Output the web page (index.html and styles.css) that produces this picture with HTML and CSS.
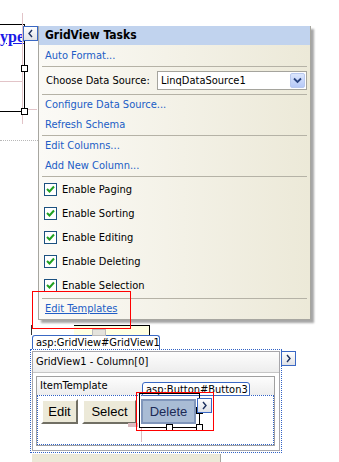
FILE: index.html
```html
<!doctype html>
<html lang="en">
	<head>
		<meta charset="UTF-8">
		<title>GridView Tasks</title>
		<link rel="stylesheet" href="styles.css">
	</head>

	<body>
		<div class="surface">

			<!-- bits of the page behind the smart tag panel -->
			<div class="old-grid">
				<a class="col-link">ype</a>
			</div>
			<span class="guide guide-v"></span>
			<span class="guide guide-h1"></span>
			<span class="guide guide-h2"></span>
			<span class="dots-line"></span>
			<span class="handle handle-1"></span>
			<span class="handle handle-2"></span>
			<div class="old-row"><span class="old-box"></span></div>

			<button class="tag-btn tag-close">
				<svg width="7" height="9" viewBox="0 0 7 9"><path d="M5 1 L2 4.5 L5 8" fill="none" stroke="#1b2f5e" stroke-width="1.4"/></svg>
			</button>

			<div class="tasks">
				<div class="tasks-title">GridView Tasks</div>

				<div class="group first">
					<a>Auto Format...</a>
				</div>

				<div class="source-row">
					<label>Choose Data Source:</label>
					<div class="select">
						<span>LinqDataSource1</span>
						<span class="drop">
							<svg width="9" height="7" viewBox="0 0 9 7"><path d="M1 1.5 L4.5 5 L8 1.5" fill="none" stroke="#2a4480" stroke-width="1.8"/></svg>
						</span>
					</div>
				</div>

				<div class="group">
					<a>Configure Data Source...</a>
					<a>Refresh Schema</a>
				</div>

				<div class="group">
					<a>Edit Columns...</a>
					<a>Add New Column...</a>
				</div>

				<div class="checks">
					<label><span class="box"><svg width="9" height="8" viewBox="0 0 9 8"><path d="M1 4 L3.5 6.5 L8 1.5" fill="none" stroke="#21a121" stroke-width="2"/></svg></span>Enable Paging</label>
					<label><span class="box"><svg width="9" height="8" viewBox="0 0 9 8"><path d="M1 4 L3.5 6.5 L8 1.5" fill="none" stroke="#21a121" stroke-width="2"/></svg></span>Enable Sorting</label>
					<label><span class="box"><svg width="9" height="8" viewBox="0 0 9 8"><path d="M1 4 L3.5 6.5 L8 1.5" fill="none" stroke="#21a121" stroke-width="2"/></svg></span>Enable Editing</label>
					<label><span class="box"><svg width="9" height="8" viewBox="0 0 9 8"><path d="M1 4 L3.5 6.5 L8 1.5" fill="none" stroke="#21a121" stroke-width="2"/></svg></span>Enable Deleting</label>
					<label><span class="box"><svg width="9" height="8" viewBox="0 0 9 8"><path d="M1 4 L3.5 6.5 L8 1.5" fill="none" stroke="#21a121" stroke-width="2"/></svg></span>Enable Selection</label>
				</div>

				<div class="group">
					<a class="underline">Edit Templates</a>
				</div>
			</div>

			<div class="mark mark-templates"></div>

			<!-- the GridView in template editing mode -->
			<div class="gv">
				<div class="ctl-tag gv-tag">asp:GridView#GridView1</div>
				<div class="gv-row">
					<div class="gv-frame">
						<div class="gv-box">
							<div class="gv-head">GridView1 - Column[0]</div>
							<div class="gv-body">
								<div class="tpl">
									<div class="tpl-head">ItemTemplate</div>
									<div class="tpl-body">
										<button class="btn btn-edit">Edit</button>
										<button class="btn btn-select">Select</button>
										<button class="btn btn-delete">Delete</button>
									</div>
								</div>
							</div>
						</div>
					</div>
					<button class="tag-btn tag-gv">
						<svg width="7" height="9" viewBox="0 0 7 9"><path d="M2 1 L5 4.5 L2 8" fill="none" stroke="#1b2f5e" stroke-width="1.4"/></svg>
					</button>
				</div>
				<div class="gv-foot"></div>
			</div>

			<div class="ctl-tag btn-tag">asp:Button#Button3</div>
			<span class="pink pink-select"></span>
			<span class="pink pink-delete"></span>
			<div class="sel-frame"></div>
			<span class="handle handle-3"></span>
			<span class="handle handle-4"></span>
			<span class="handle handle-5"></span>
			<button class="tag-btn tag-delete">
				<svg width="7" height="9" viewBox="0 0 7 9"><path d="M2 1 L5 4.5 L2 8" fill="none" stroke="#1b2f5e" stroke-width="1.4"/></svg>
			</button>
			<div class="mark mark-delete"></div>
		</div>
	</body>
</html>
```

FILE: styles.css
```css
* {
	padding: 0;
	margin: 0;
	box-sizing: border-box;
}
body {
	background-color: #fff;
	color: #000;
	font-size: 11px;
	font-family: Tahoma, "DejaVu Sans Condensed", "DejaVu Sans", sans-serif;
}
.surface {
	position: relative;
	width: 339px;
	height: 462px;
	overflow: hidden;
	padding: 335px 0 0 30px;
}

/* page behind */
.old-grid {
	position: absolute;
	left: 0;
	top: 24px;
	width: 25px;
	height: 88px;
	border: 1px solid #000;
	border-left: none;
	overflow: hidden;
}
.col-link {
	position: absolute;
	left: 0;
	top: 3px;
	font-family: "Liberation Serif", serif;
	font-weight: bold;
	font-size: 16px;
	color: #1a1ae6;
	text-decoration: underline;
	white-space: nowrap;
}
.guide {
	position: absolute;
	background-color: #e2c4c8;
}
.guide-v {
	left: 22px;
	top: 13px;
	width: 1px;
	height: 111px;
}
.guide-h1 {
	left: 0;
	top: 81px;
	width: 22px;
	height: 1px;
}
.guide-h2 {
	left: 25px;
	top: 109px;
	width: 12px;
	height: 1px;
}
.dots-line {
	position: absolute;
	left: 0;
	top: 140px;
	width: 38px;
	border-top: 1px dotted #b8b8b8;
}
.handle {
	position: absolute;
	width: 7px;
	height: 7px;
	background-color: #fff;
	border: 1px solid #000;
}
.handle-1 { left: 21px; top: 65px; }
.handle-2 { left: 21px; top: 108px; }
.old-row {
	position: absolute;
	left: 31px;
	top: 325px;
	width: 118px;
	height: 10px;
	border-left: 1px solid #333;
}
.old-row::before {
	content: "";
	position: absolute;
	left: 42px;
	top: 0;
	width: 75px;
	height: 9px;
	background-color: #ffffe1;
	border-top: 1px solid #000;
	border-right: 1px solid #000;
}
.old-box {
	position: absolute;
	left: 60px;
	top: 4px;
	width: 14px;
	height: 7px;
	background-color: #e4e3dc;
	border: 1px solid #bbb;
}

/* smart tag glyph buttons */
.tag-btn {
	position: absolute;
	width: 15px;
	height: 15px;
	border: 1px solid #3a68c4;
	background: linear-gradient(#ffffff, #dfe1e6);
	display: flex;
	align-items: center;
	justify-content: center;
}
.tag-close { left: 23px; top: 26px; }
.tag-delete { left: 197px; top: 398px; }
.tag-gv {
	position: static;
	margin: 2px 0 0 -1px;
}

/* tasks panel */
.tasks {
	position: absolute;
	left: 38px;
	top: 26px;
	width: 273px;
	border: 1px solid #a7a6a0;
	border-top: none;
	background: linear-gradient(to right, #fbfaf6, #ece9d8);
	box-shadow: 3px 3px 2px rgba(0, 0, 0, 0.35);
}
.tasks-title {
	height: 19px;
	line-height: 19px;
	padding-left: 6px;
	background-color: #c1d3ee;
	font-weight: bold;
	font-size: 12px;
}
.group, .source-row, .checks {
	margin: 0 3px;
	border-bottom: 1px solid #b5b2a6;
}
.group:last-child {
	border-bottom: none;
}
.group.first {
	padding-top: 1px;
}
.group a {
	display: block;
	height: 20px;
	line-height: 20px;
	padding-left: 3px;
	color: #215dc6;
}
.group a.underline {
	text-decoration: underline;
}
.source-row {
	display: flex;
	align-items: center;
	padding: 4px 0 4px 4px;
	justify-content: space-between;
}
.select {
	display: flex;
	align-items: center;
	justify-content: space-between;
	width: 150px;
	height: 19px;
	border: 1px solid #a5a49d;
	background-color: #fff;
	padding: 0 1px 0 3px;
}
.drop {
	display: flex;
	align-items: center;
	justify-content: center;
	width: 15px;
	height: 15px;
	border: 1px solid #b9c9ef;
	border-radius: 2px;
	background: linear-gradient(#dce6fd, #b6c9f7);
}
.checks {
	padding: 0 0 1px 2px;
}
.checks label {
	display: flex;
	align-items: center;
	height: 24px;
}
.box {
	display: flex;
	align-items: center;
	justify-content: center;
	width: 13px;
	height: 13px;
	margin-right: 5px;
	border: 1px solid #1c5180;
	background-color: #fff;
}

/* red marks */
.mark {
	position: absolute;
	border: 1px solid #f00;
}
.mark-templates {
	left: 32px;
	top: 291px;
	width: 99px;
	height: 38px;
}
.mark-delete {
	left: 136px;
	top: 392px;
	width: 78px;
	height: 39px;
}

/* gridview designer */
.ctl-tag {
	height: 14px;
	line-height: 13px;
	padding-left: 3px;
	font-size: 11px;
	background-color: #fff;
	border: 1px solid #3a68c4;
	border-bottom: none;
	border-radius: 3px 3px 0 0;
	white-space: nowrap;
}
.gv-tag {
	width: 128px;
	margin-left: 2px;
}
.btn-tag {
	position: absolute;
	left: 142px;
	top: 382px;
	width: 108px;
	height: 14px;
	border-bottom: 1px solid #3a68c4;
}
.gv-row {
	display: flex;
	align-items: flex-start;
}
.gv-frame {
	width: 252px;
	height: 104px;
	padding: 1px;
	border: 1px dotted #3162c5;
}
.gv-box {
	height: 100%;
	border: 1px solid #a7a6aa;
}
.gv-head {
	height: 21px;
	line-height: 20px;
	padding-left: 3px;
	border-bottom: 1px solid #c6c6c6;
	background: linear-gradient(#fdfdfd, #ededed);
}
.gv-body {
	padding: 3px 4px 0 3px;
}
.tpl {
	border: 1px solid #a0a0a0;
}
.tpl-head {
	height: 18px;
	line-height: 18px;
	padding-left: 3px;
	background: linear-gradient(#fdfdfd, #ededed);
}
.tpl-body {
	display: flex;
	gap: 4px;
	height: 50px;
	padding: 3px;
	border: 1px dotted #3162c5;
}
.btn {
	height: 25px;
	font-family: "Liberation Sans", Arial, sans-serif;
	font-size: 13px;
	color: #000;
	background-color: #ece9d8;
	border: 2px solid;
	border-color: #fff #716f64 #716f64 #fff;
}
.btn-edit { width: 37px; }
.btn-select { width: 55px; }
.btn-delete {
	width: 55px;
	color: #1b2a55;
	background-color: #a9bcd5;
	border-color: #8096bb;
}
.gv-foot {
	width: 189px;
	height: 9px;
	margin: 1px 0 0 2px;
	background-color: #ece9d8;
	border-right: 1px solid #a7a6a0;
}

/* selection around the Delete button */
.pink {
	position: absolute;
	background-color: #dcbcc0;
}
.pink-select {
	left: 128px;
	top: 423px;
	width: 10px;
	height: 4px;
}
.pink-delete {
	left: 141px;
	top: 428px;
	width: 1px;
	height: 14px;
}
.sel-frame {
	position: absolute;
	left: 139px;
	top: 393px;
	width: 61px;
	height: 35px;
	border: 1px solid #000;
}
.handle-3 { left: 166px; top: 424px; }
.handle-4 { left: 196px; top: 424px; }
.handle-5 { left: 196px; top: 407px; }
```
